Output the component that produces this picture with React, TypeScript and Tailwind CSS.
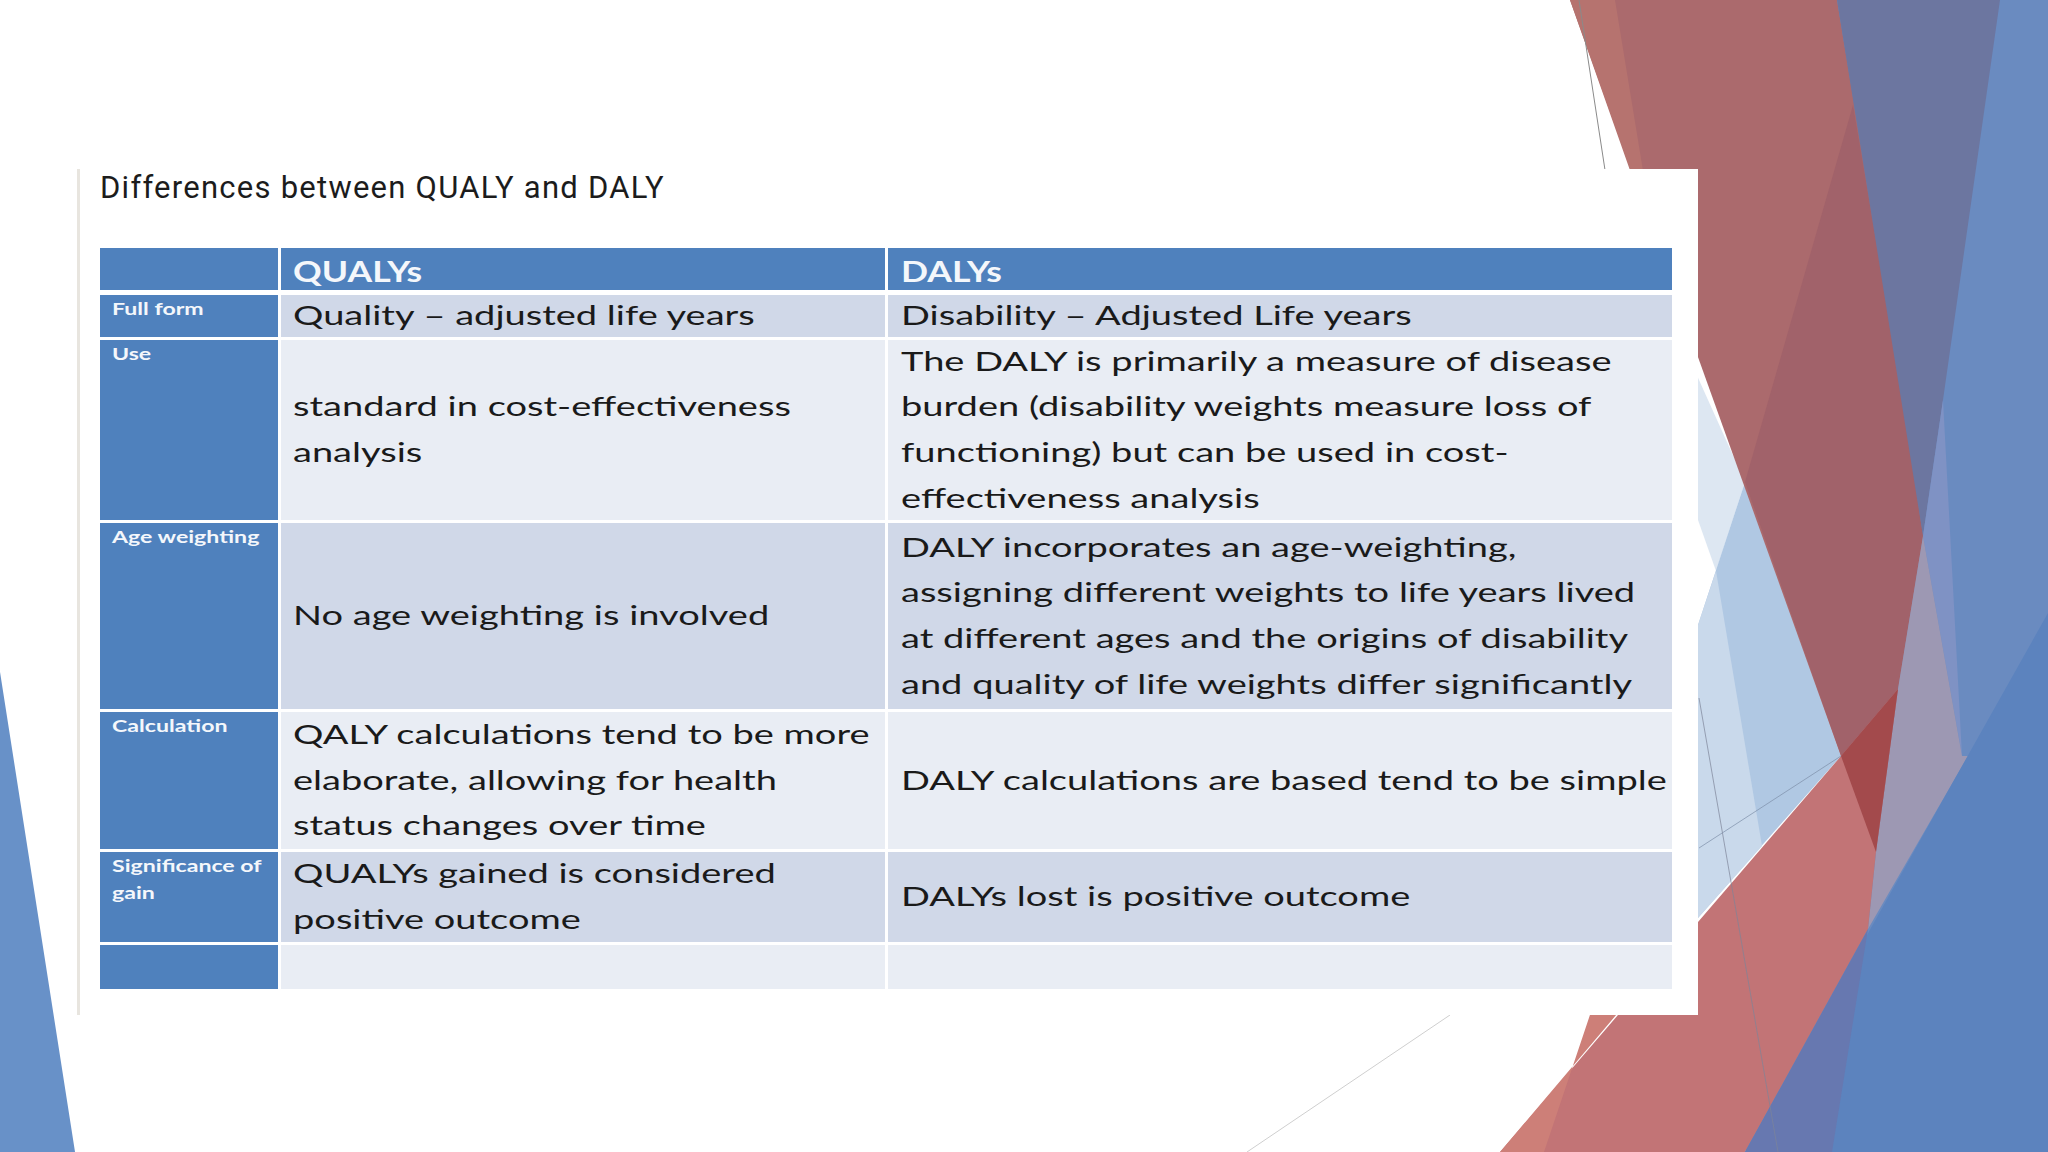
import React from "react";

type Row = {
  label: string[];
  q: string[];
  d: string[];
  h: string;
  bg: string;
};

const ROWS: Row[] = [
  {
    label: ["Full form"],
    q: ["Quality – adjusted life years"],
    d: ["Disability – Adjusted Life years"],
    h: "h-[42px]",
    bg: "bg-[#d0d8e8]",
  },
  {
    label: ["Use"],
    q: ["standard in cost-effectiveness", "analysis"],
    d: [
      "The DALY is primarily a measure of disease",
      "burden (disability weights measure loss of",
      "functioning) but can be used in cost-",
      "effectiveness analysis",
    ],
    h: "h-[180px]",
    bg: "bg-[#e9edf4]",
  },
  {
    label: ["Age weighting"],
    q: ["No age weighting is involved"],
    d: [
      "DALY incorporates an age-weighting,",
      "assigning different weights to life years lived",
      "at different ages and the origins of disability",
      "and quality of life weights differ significantly",
    ],
    h: "h-[186px]",
    bg: "bg-[#d0d8e8]",
  },
  {
    label: ["Calculation"],
    q: ["QALY calculations tend to be more", "elaborate, allowing for health", "status changes over time"],
    d: ["DALY calculations are based tend to be simple"],
    h: "h-[137px]",
    bg: "bg-[#e9edf4]",
  },
  {
    label: ["Significance of", "gain"],
    q: ["QUALYs gained is considered", "positive outcome"],
    d: ["DALYs lost is positive outcome"],
    h: "h-[90px]",
    bg: "bg-[#d0d8e8]",
  },
  { label: [], q: [], d: [], h: "h-[44px]", bg: "bg-[#e9edf4]" },
];

// the slide picture is stretched sideways, so the text is too
const STRETCH = "inline-block origin-left scale-x-[1.435]";
const STRETCH_HEAD = "inline-block origin-left scale-x-[1.27]";
const STRETCH_LABEL = "inline-block origin-left scale-x-[1.36]";

function Lines({ lines, stretch = STRETCH }: { lines: string[]; stretch?: string }) {
  return (
    <div className={stretch}>
      {lines.map((l) => (
        <div key={l} className="whitespace-nowrap">
          {l}
        </div>
      ))}
    </div>
  );
}

function Backdrop() {
  return (
    <svg className="absolute inset-0" width="2048" height="1152" viewBox="0 0 2048 1152">
      <polygon points="0,672 75,1152 0,1152" fill="#6891c8" />
      {/* base fill so the facets leave no seams */}
      <polygon points="1837,0 2048,0 2048,1152 1745,1152 1841,756" fill="#6a8bc0" />
      <polygon points="1690,360 1745,482 1716,571 1698,520" fill="#dde7f2" />
      <polygon points="1745,482 1841,756 1698,918 1698,625" fill="#b0c8e3" />
      <polygon points="1698,625 1716,571 1762,846 1698,918" fill="#c9d9eb" />
      <polygon points="1570,0 1837,0 1903,400 1923,536 1898,689 1841,756" fill="#ab6a6d" />
      <polygon points="1570,0 1615,0 1670,335 1688,335" fill="#b6736f" />
      <polygon points="1853,105 1903,400 1923,536 1898,689 1841,756 1745,482" fill="#a1626a" />
      <polygon points="1837,0 2000,0 1943,400 1923,536" fill="#6c76a0" />
      <polygon points="1923,536 1943,400 1962,756" fill="#7f92c4" />
      <polygon points="1923,536 1962,756 1968,756 1868,929 1876,852 1898,689" fill="#9d98b3" />
      <polygon points="1500,1152 1841,756 1898,689 1876,852 1868,929 1745,1152" fill="#c27476" />
      <polygon points="1500,1152 1544,1152 1600,985 1650,975" fill="#cd7f78" />
      <polygon points="1841,756 1898,689 1876,852" fill="#a34a4c" />
      <polygon points="1745,1152 2048,613 2048,1152" fill="#5c83be" />
      <polygon points="1745,1152 1868,929 1832,1152" fill="#6778b0" />
      <line x1="1579" y1="0" x2="1605" y2="170" stroke="#8a8a8a" strokeWidth="1" />
      <line x1="1699" y1="698" x2="1778" y2="1152" stroke="#7d8598" strokeWidth="1" strokeOpacity="0.7" />
      <line x1="1699" y1="848" x2="1841" y2="756" stroke="#7d8fa8" strokeWidth="1" strokeOpacity="0.7" />
      <line x1="1450" y1="1015" x2="1247" y2="1152" stroke="#cfcfcf" strokeWidth="1" />
    </svg>
  );
}

export default function App() {
  return (
    <div className="relative w-[2048px] h-[1152px] overflow-hidden bg-white">
      <Backdrop />

      <div className="relative pt-[169px] pl-[77px]">
        <div className="w-[1621px] h-[846px] bg-white border-l-[3px] border-[#e8e5df] pl-[20px] pt-[3px]">
          {/* title */}
          <div className="h-[31px] leading-[31px] text-[31px] text-[#1c1c1c] tracking-[1.25px]" style={{ fontFamily: "Roboto, sans-serif" }}>
            Differences between QUALY and DALY
          </div>

          {/* table */}
          <div className="mt-[45px] w-[1572px] flex flex-col gap-y-[3px]" style={{ fontFamily: "Lato, sans-serif" }}>
            <div className="grid grid-cols-[178px_604px_784px] grid-rows-[minmax(0,1fr)] gap-x-[3px] h-[42px] mb-[2px] text-[#f4f7fb] font-bold text-[28px]">
              <div className="bg-[#4f81bd]" />
              <div className="bg-[#4f81bd] pl-[12px] pt-[4px] flex items-center leading-[42px]">
                <span className={STRETCH_HEAD}>QUALYs</span>
              </div>
              <div className="bg-[#4f81bd] pl-[13px] pt-[4px] flex items-center leading-[42px]">
                <span className={STRETCH_HEAD}>DALYs</span>
              </div>
            </div>

            {ROWS.map((r, i) => (
              <div key={i} className={`grid grid-cols-[178px_604px_784px] grid-rows-[minmax(0,1fr)] gap-x-[3px] ${r.h}`}>
                <div className="bg-[#4f81bd] pl-[12px] text-[17px] leading-[27px] font-bold text-[#f4f7fb] min-h-0">
                  {r.label.length > 0 && <Lines lines={r.label} stretch={STRETCH_LABEL} />}
                </div>
                <div className={`${r.bg} pl-[12px] flex items-center min-h-0 text-[26.5px] leading-[45.7px] text-[#1a1a1a]`}>
                  {r.q.length > 0 && <Lines lines={r.q} />}
                </div>
                <div className={`${r.bg} pl-[13px] flex items-center min-h-0 text-[26.5px] leading-[45.7px] text-[#1a1a1a]`}>
                  {r.d.length > 0 && <Lines lines={r.d} />}
                </div>
              </div>
            ))}
          </div>
        </div>
      </div>
    </div>
  );
}
